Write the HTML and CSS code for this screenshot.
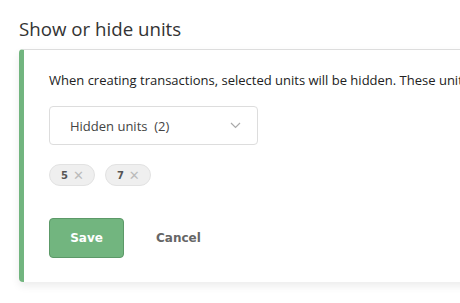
FILE: index.html
```html
<!DOCTYPE html>
<html>
  <head>
    <meta charset="utf-8">
    <link rel="stylesheet" href="styles.css">
  </head>
  <body>
    <h2 class="units__title">Show or hide units</h2>
    <div class="units__card">
      <p class="units__hint">When creating transactions, selected units will be hidden. These units</p>
      <div class="units__select">
        <span>Hidden units&nbsp; (2)</span>
        <svg class="units__chevron" width="11" height="7" viewBox="0 0 11 7">
          <path d="M1 1 L5.5 5.5 L10 1" fill="none" stroke="#aaa" stroke-width="1.2"/>
        </svg>
      </div>
      <div class="units__tags">
        <span class="units__tag">5 <b class="units__x">&#x2715;</b></span>
        <span class="units__tag">7 <b class="units__x">&#x2715;</b></span>
      </div>
      <div class="units__actions">
        <button class="units__save">Save</button>
        <button class="units__cancel">Cancel</button>
      </div>
    </div>
  </body>
</html>
```

FILE: styles.css
```css
html, body {
  margin: 0;
  background: #fff;
  overflow: hidden;
}
body {
  font-family: "Open Sans", "Lato", sans-serif;
  color: #333;
  width: 460px;
  height: 303px;
}
.units__title {
  font-weight: normal;
  font-size: 18.7px;
  margin: 0;
  padding: 18px 0 9px 19px;
  line-height: 22px;
  color: #333;
}
.units__card {
  margin-left: 19px;
  width: 620px;
  height: 233px;
  box-sizing: border-box;
  border-left: 5px solid #72b57f;
  border-top: 1px solid #ddd;
  border-radius: 4px 0 0 4px;
  box-shadow: 0 4px 8px rgba(0,0,0,.08);
  padding: 22px 0 0 25px;
}
.units__hint {
  margin: 0;
  font-size: 13px;
  line-height: 16px;
  color: #222;
  white-space: nowrap;
}
.units__select {
  margin-top: 18px;
  width: 209px;
  height: 39px;
  box-sizing: border-box;
  border: 1px solid #ddd;
  border-radius: 4px;
  display: flex;
  align-items: center;
  justify-content: space-between;
  padding: 0 16px 0 20px;
  font-size: 13px;
  color: #444;
}
.units__tags {
  display: flex;
  gap: 10px;
  margin-top: 19px;
}
.units__tag {
  display: inline-flex;
  align-items: center;
  gap: 5px;
  height: 22px;
  box-sizing: border-box;
  padding: 0 10px 0 11px;
  border: 1px solid #e2e2e2;
  border-radius: 11px;
  background: #efefef;
  font-family: "DejaVu Sans", sans-serif;
  font-weight: bold;
  font-size: 10px;
  color: #555;
}
.units__x {
  color: #bbb;
  font-size: 13px;
}
.units__actions {
  display: flex;
  align-items: center;
  margin-top: 32px;
}
.units__save,
.units__cancel {
  font-family: "DejaVu Sans", sans-serif;
  font-weight: bold;
  font-size: 12px;
  border-radius: 4px;
  cursor: pointer;
}
.units__save {
  width: 75px;
  height: 40px;
  background: #72b57f;
  border: 1px solid #5c9968;
  color: #fff;
}
.units__cancel {
  background: none;
  border: none;
  color: #666;
  margin-left: 26px;
}
```
